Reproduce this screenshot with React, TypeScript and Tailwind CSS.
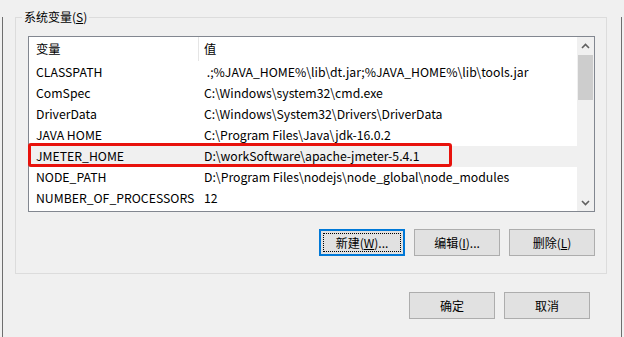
const font = "font-['Microsoft_YaHei_UI','Noto_Sans_CJK_SC',sans-serif]";

const rows: [string, string][] = [
  ["CLASSPATH", "\u00a0.;%JAVA_HOME%\\lib\\dt.jar;%JAVA_HOME%\\lib\\tools.jar"],
  ["ComSpec", "C:\\Windows\\system32\\cmd.exe"],
  ["DriverData", "C:\\Windows\\System32\\Drivers\\DriverData"],
  ["JAVA HOME", "C:\\Program Files\\Java\\jdk-16.0.2"],
  ["JMETER_HOME", "D:\\workSoftware\\apache-jmeter-5.4.1"],
  ["NODE_PATH", "D:\\Program Files\\nodejs\\node_global\\node_modules"],
  ["NUMBER_OF_PROCESSORS", "12"],
];

function Chevron({ up }: { up?: boolean }) {
  return (
    <svg width="9" height="6" viewBox="0 0 9 6">
      <polyline
        points={up ? "1,5 4.5,1.5 8,5" : "1,1 4.5,4.5 8,1"}
        fill="none"
        stroke="#606060"
        strokeWidth="1.6"
      />
    </svg>
  );
}

function Btn({ label, hot, focus }: { label: string; hot?: string; focus?: boolean }) {
  const [pre, post] = hot ? label.split(hot) : [label, ""];
  return (
    <div
      className={`relative flex h-[27px] w-[86px] items-center justify-center bg-[#e1e1e1] text-[12px] text-black ${
        focus ? "border-2 border-[#0078d7]" : "border border-[#adadad]"
      }`}
    >
      {focus && <div className="absolute inset-[2px] border border-dotted border-black" />}
      <span>
        {pre}
        {hot && <span className="underline">{hot}</span>}
        {post}
      </span>
    </div>
  );
}

export default function App() {
  return (
    <div className={`h-[337px] w-[624px] overflow-hidden bg-[#f0f0f0] ${font}`}>
      <div className="relative ml-[2px] h-[337px] w-[620px] border-x border-b border-[#6e6e6e] bg-[#f0f0f0]">
        {/* group box */}
        <div className="relative ml-[12px] mt-[17px] h-[257px] w-[592px] border border-[#dcdcdc]">
          <div className="absolute left-[6px] top-[-10px] bg-[#f0f0f0] px-[2px] text-[12px] leading-[18px] text-black">
            系统变量(<span className="underline">S</span>)
          </div>

          {/* list */}
          <div className="relative ml-[12px] mt-[18px] flex h-[176px] w-[567px] border border-[#828790] bg-white">
            <div className="flex-1 overflow-hidden text-[12.25px] text-black">
              <div className="flex h-[25px] items-center pb-[1px]">
                <div className="w-[169px] pl-[7px]">变量</div>
                <div className="h-[24px] w-px self-start bg-[#e5e5e5]" />
                <div className="pl-[5px]">值</div>
              </div>
              {rows.map(([k, v]) => (
                <div
                  key={k}
                  className={`flex h-[21px] items-center whitespace-nowrap pb-[1px] ${
                    k === "JMETER_HOME" ? "bg-[#f0f0f0]" : ""
                  }`}
                >
                  <div className="w-[170px] pl-[7px]">{k}</div>
                  <div className="pl-[5px]">{v}</div>
                </div>
              ))}
            </div>
            <div className="flex w-[17px] flex-col items-center bg-[#f0f0f0]">
              <div className="flex h-[17px] items-center justify-center">
                <Chevron up />
              </div>
              <div className="mt-[1px] h-[45px] w-[15px] bg-[#cdcdcd]" />
              <div className="flex-1" />
              <div className="flex h-[17px] items-center justify-center">
                <Chevron />
              </div>
            </div>
            <div className="absolute left-[-1px] top-[106px] h-[24px] w-[424px] rounded-[3px] border-[3px] border-[#e8120c]" />
          </div>

          <div className="mt-[17px] flex justify-end gap-[9px] pr-[11px]">
            <Btn label="新建(W)..." hot="W" focus />
            <Btn label="编辑(I)..." hot="I" />
            <Btn label="删除(L)" hot="L" />
          </div>
        </div>

        <div className="mt-[18px] flex justify-end gap-[9px] pr-[31px]">
          <Btn label="确定" />
          <Btn label="取消" />
        </div>

        {/* size grip */}
        <svg className="absolute bottom-[1px] right-[1px]" width="11" height="11" viewBox="0 0 11 11">
          {[
            [8, 0],
            [4, 4],
            [8, 4],
            [0, 8],
            [4, 8],
            [8, 8],
          ].map(([x, y]) => (
            <rect key={`${x}-${y}`} x={x} y={y} width="2" height="2" fill="#b4b4b4" />
          ))}
        </svg>
      </div>
    </div>
  );
}
